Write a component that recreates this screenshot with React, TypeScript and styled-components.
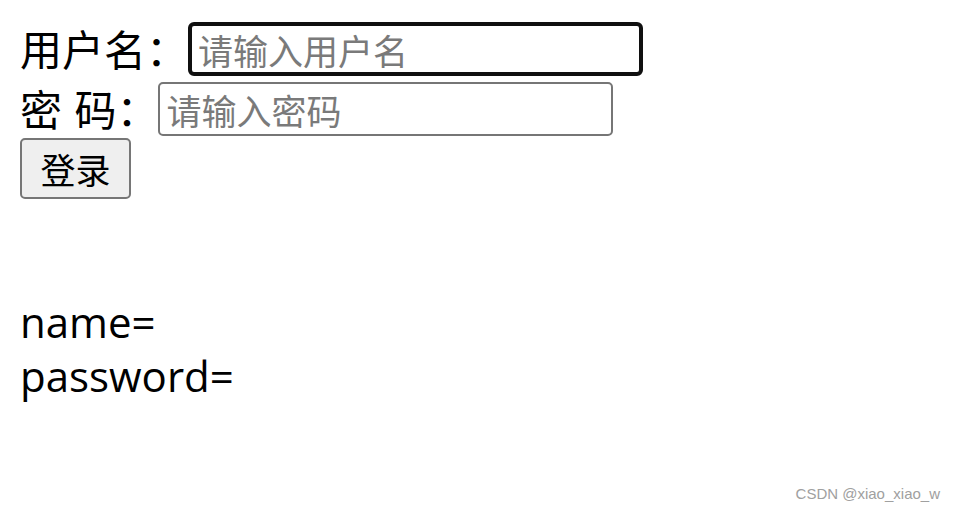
import React from 'react';
import styled, { createGlobalStyle } from 'styled-components';

const GlobalStyle = createGlobalStyle`
    html, body {
        margin: 0;
        padding: 0;
        background: #ffffff;
    }
    body {
        font-family: "Open Sans", "Noto Sans CJK SC", sans-serif;
        color: #000000;
    }
`;

const App = () => {
    return (
        <>
            <GlobalStyle />
            <Styled.Page>
                <Styled.Form>
                    <Styled.Row>
                        <Styled.Label>用户名：</Styled.Label>
                        <Styled.Input type="text" placeholder="请输入用户名" $focused />
                    </Styled.Row>
                    <Styled.Row>
                        <Styled.Label>密 码：</Styled.Label>
                        <Styled.Input type="password" placeholder="请输入密码" />
                    </Styled.Row>
                    <Styled.Button type="button">登录</Styled.Button>
                </Styled.Form>

                <Styled.Result>
                    <Styled.Line>name=</Styled.Line>
                    <Styled.Line>password=</Styled.Line>
                </Styled.Result>

                <Styled.Watermark>CSDN @xiao_xiao_w</Styled.Watermark>
            </Styled.Page>
        </>
    );
};

const Styled = {
    Page: styled.div`
        position: relative;
        width: 956px;
        height: 511px;
        box-sizing: border-box;
        padding: 22px 0 0 20px;
        overflow: hidden;
    `,

    Form: styled.form`
        display: flex;
        flex-direction: column;
        align-items: flex-start;
        margin: 0;
    `,

    Row: styled.div`
        display: flex;
        flex-direction: row;
        align-items: center;
        height: 54px;
        margin-bottom: 6px;
        white-space: nowrap;
    `,

    Label: styled.span`
        font-family: "Noto Sans CJK SC", sans-serif;
        font-size: 42px;
        line-height: 54px;
        word-spacing: 3px;
        margin-top: -3px;
    `,

    Input: styled.input<{ $focused?: boolean }>`
        box-sizing: border-box;
        width: 455px;
        height: 54px;
        padding: 0 6px;
        margin: 0;
        font-family: "Noto Sans CJK SC", sans-serif;
        font-size: 35px;
        color: #000000;
        background: #ffffff;
        border: ${(props) => (props.$focused ? '4px solid #101010' : '2px solid #767676')};
        border-radius: ${(props) => (props.$focused ? '6px' : '5px')};
        outline: none;

        &::placeholder {
            color: #7a7a7a;
        }
    `,

    Button: styled.button`
        box-sizing: border-box;
        width: 111px;
        height: 61px;
        margin-top: -4px;
        padding: 0;
        font-family: "Noto Sans CJK SC", sans-serif;
        font-size: 35px;
        color: #000000;
        background: #efefef;
        border: 2px solid #767676;
        border-radius: 5px;
    `,

    Result: styled.div`
        margin-top: 96px;
    `,

    Line: styled.div`
        font-family: "Open Sans", sans-serif;
        font-size: 42px;
        line-height: 54px;
    `,

    Watermark: styled.span`
        position: absolute;
        right: 16px;
        bottom: 9px;
        font-family: "Liberation Sans", Arial, sans-serif;
        font-size: 15px;
        color: #a0a0a0;
    `,
};

export default App;
